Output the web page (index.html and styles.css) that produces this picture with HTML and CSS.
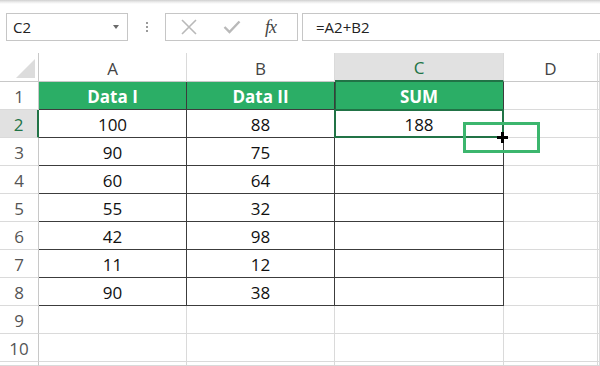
FILE: index.html
```html
<!DOCTYPE html>
<html lang="en">
<head>
    <meta charset="UTF-8">
    <title>Sheet - SUM</title>
    <link rel="stylesheet" href="styles.css">
</head>
<body>
    <div class="toolbar">
        <div class="namebox">
            <span>C2</span>
            <span class="caret"></span>
        </div>
        <div class="grip"><i></i><i></i><i></i></div>
        <div class="fxbtns">
            <svg width="18" height="16" viewBox="0 0 18 16"><path d="M2 1 L16 15 M16 1 L2 15" stroke="#b9b9b9" stroke-width="1.6" fill="none"/></svg>
            <svg width="18" height="14" viewBox="0 0 18 14"><path d="M1.5 7 L6.5 12 L16.5 1.5" stroke="#b9b9b9" stroke-width="2.4" fill="none"/></svg>
            <span class="fx">fx</span>
        </div>
        <div class="formula">=A2+B2</div>
    </div>

    <div class="sheet">
        <div class="corner"><span></span></div>
        <div class="col">A</div>
        <div class="col">B</div>
        <div class="col active">C</div>
        <div class="col">D</div>
        <div class="col"></div>

        <div class="row">1</div>
        <div class="cell t head">Data I</div>
        <div class="cell t head">Data II</div>
        <div class="cell t head sumhead">SUM</div>
        <div class="cell"></div>
        <div class="cell"></div>

        <div class="row active">2</div>
        <div class="cell t">100</div>
        <div class="cell t">88</div>
        <div class="cell t sel">188</div>
        <div class="cell"></div>
        <div class="cell"></div>

        <div class="row">3</div>
        <div class="cell t">90</div>
        <div class="cell t">75</div>
        <div class="cell t"></div>
        <div class="cell"></div>
        <div class="cell"></div>

        <div class="row">4</div>
        <div class="cell t">60</div>
        <div class="cell t">64</div>
        <div class="cell t"></div>
        <div class="cell"></div>
        <div class="cell"></div>

        <div class="row">5</div>
        <div class="cell t">55</div>
        <div class="cell t">32</div>
        <div class="cell t"></div>
        <div class="cell"></div>
        <div class="cell"></div>

        <div class="row">6</div>
        <div class="cell t">42</div>
        <div class="cell t">98</div>
        <div class="cell t"></div>
        <div class="cell"></div>
        <div class="cell"></div>

        <div class="row">7</div>
        <div class="cell t">11</div>
        <div class="cell t">12</div>
        <div class="cell t"></div>
        <div class="cell"></div>
        <div class="cell"></div>

        <div class="row">8</div>
        <div class="cell t">90</div>
        <div class="cell t">38</div>
        <div class="cell t"></div>
        <div class="cell"></div>
        <div class="cell"></div>

        <div class="row">9</div>
        <div class="cell"></div>
        <div class="cell"></div>
        <div class="cell"></div>
        <div class="cell"></div>
        <div class="cell"></div>

        <div class="row">10</div>
        <div class="cell"></div>
        <div class="cell"></div>
        <div class="cell"></div>
        <div class="cell"></div>
        <div class="cell"></div>

        <!-- top sliver of row 11 -->
        <div class="row"></div>
        <div class="cell"></div>
        <div class="cell"></div>
        <div class="cell"></div>
        <div class="cell"></div>
        <div class="cell"></div>
    </div>

    <!-- fill-handle drag preview -->
    <div class="drag"></div>
    <div class="cursor"></div>
</body>
</html>
```

FILE: styles.css
```css
body {
    margin: 0;
    width: 600px;
    height: 366px;
    overflow: hidden;
    background: white;
    font-family: "Open Sans", "Liberation Sans", sans-serif;
    position: relative;
}
.toolbar {
    height: 53px;
    box-sizing: border-box;
    padding-top: 13px;
    display: flex;
    align-items: flex-start;
    background: linear-gradient(180deg, #cfcfcf 0px, #ececec 2px, #fff 4px);
}
.namebox {
    margin-left: 6px;
    width: 122px;
    height: 28px;
    box-sizing: border-box;
    border: 1px solid #c6c6c6;
    display: flex;
    align-items: center;
    justify-content: space-between;
    padding: 0 8px 0 6px;
    font-size: 15px;
    color: #222;
}
.caret {
    width: 0;
    height: 0;
    border-left: 3.5px solid transparent;
    border-right: 3.5px solid transparent;
    border-top: 4px solid #6a6a6a;
}
.grip {
    width: 37px;
    height: 28px;
    display: flex;
    flex-direction: column;
    align-items: center;
    justify-content: center;
    gap: 2px;
}
.grip i {
    width: 2px;
    height: 2px;
    background: #9a9a9a;
}
.fxbtns {
    width: 133px;
    height: 28px;
    box-sizing: border-box;
    border: 1px solid #c6c6c6;
    display: flex;
    align-items: center;
    padding-left: 14px;
    gap: 25px;
}
.fx {
    font-family: "Liberation Serif", "DejaVu Serif", serif;
    font-style: italic;
    font-size: 18px;
    color: #444;
    margin-left: -1px;
    letter-spacing: -1px;
}
.formula {
    flex: 1;
    margin-left: 4px;
    margin-right: -4px;
    height: 28px;
    box-sizing: border-box;
    border: 1px solid #c6c6c6;
    padding-left: 13px;
    line-height: 26px;
    font-size: 15px;
    color: #222;
}
.sheet {
    display: grid;
    grid-template-columns: 39px 148px 148px 169px 94px 2px;
    grid-template-rows: 29px repeat(10, 28px) 4px;
    font-size: 17px;
}
.sheet > div {
    box-sizing: border-box;
    border-right: 1px solid #dadada;
    border-bottom: 1px solid #dadada;
    display: flex;
    align-items: center;
    justify-content: center;
    padding-top: 2px;
    white-space: nowrap;
    overflow: hidden;
}
.sheet .corner {
    border-right-color: #c8c8c8;
    border-bottom-color: #c8c8c8;
    padding: 0;
    align-items: flex-end;
    justify-content: flex-end;
}
.corner span {
    width: 0;
    height: 0;
    border-left: 19px solid transparent;
    border-bottom: 19px solid #dcdcdc;
    margin: 0 3px 3px 0;
}
.sheet .col {
    color: #444;
    border-bottom-color: #c8c8c8;
}
.sheet .col.active {
    background: #e1e1e1;
    color: #217346;
    border-bottom: 2px solid #217346;
}
.sheet .row {
    color: #555;
    border-right-color: #c8c8c8;
}
.sheet .row.active {
    background: #e1e1e1;
    color: #217346;
    border-right: 2px solid #217346;
}
.sheet .cell {
    color: #111;
}
.sheet .cell.t {
    border-right-color: #3c3c3c;
    border-bottom-color: #3c3c3c;
}
.sheet .cell.head {
    background: #2bae66;
    color: white;
    font-weight: 700;
}
.sheet .sumhead {
    border-right-color: #1d6a3e;
    border-bottom-color: #1d6a3e;
    box-shadow: inset 1px 0 0 #1d6a3e;
}
.sheet .sel {
    position: relative;
    overflow: visible;
}
.sel::after {
    content: "";
    position: absolute;
    left: -1px;
    top: -1px;
    right: -1px;
    bottom: -1px;
    border: 2px solid #217346;
}
.drag {
    position: absolute;
    left: 463px;
    top: 122px;
    width: 77px;
    height: 31px;
    box-sizing: border-box;
    border: 3px solid #3cb66e;
}
.cursor {
    position: absolute;
    left: 497px;
    top: 132px;
    width: 11px;
    height: 11px;
}
.cursor::before,
.cursor::after {
    content: "";
    position: absolute;
    background: #000;
}
.cursor::before {
    left: 4px;
    top: 0;
    width: 3px;
    height: 11px;
}
.cursor::after {
    left: 0;
    top: 4px;
    width: 11px;
    height: 3px;
}
```
